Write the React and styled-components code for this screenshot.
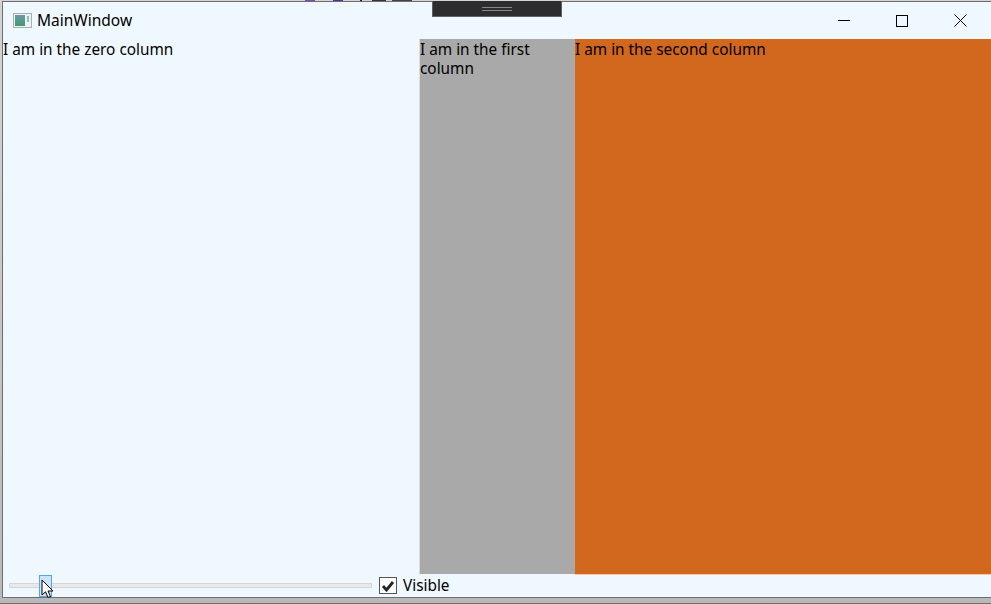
import styled, { createGlobalStyle } from "styled-components"

const GlobalStyle = createGlobalStyle`
  html, body {
    margin: 0;
    padding: 0;
    background: #c4c4c4;
  }
  body {
    font-family: "Noto Sans", "Open Sans", sans-serif;
    color: #000;
  }
`

const Desktop = styled.div`
  width: 991px;
  height: 604px;
  padding: 1px 0 0 2px;
  box-sizing: border-box;
  position: relative;
  overflow: hidden;
  background: linear-gradient(#d4d4d4, #b9b9b9);
  border-bottom: 1px solid #6e6e6e;
`

// bits of whatever sits behind the window, showing above its top edge
const BehindMark = styled.div`
  position: absolute;
  top: 0;
  left: ${props => props.x}px;
  width: ${props => props.w}px;
  height: 1px;
  background: ${props => props.color};
`

const Window = styled.div`
  width: 989px;
  height: 597px;
  box-sizing: border-box;
  border-top: 1px solid #6e6e6e;
  border-left: 1px solid #6e6e6e;
  border-bottom: 1px solid #6e6e6e;
  background: #f0f8ff;
  display: flex;
  flex-direction: column;
`

const TitleBar = styled.div`
  height: 37px;
  flex: none;
  display: flex;
  align-items: center;
  padding: 0 1px 0 10px;
`

const AppIcon = styled.svg`
  width: 19px;
  height: 15px;
  flex: none;
  margin-right: 6px;
`

const Title = styled.span`
  font-size: 15.5px;
  flex: 1;
  position: relative;
  top: -1px;
  margin-left: -1px;
`

const WinButton = styled.div`
  width: 58.5px;
  height: 37px;
  display: flex;
  align-items: center;
  justify-content: center;
`

const Columns = styled.div`
  flex: 1;
  display: flex;
  min-height: 0;
`

const Column = styled.div`
  width: ${props => props.w}px;
  flex: none;
  box-sizing: border-box;
  background: ${props => props.bg};
  border-left: ${props => (props.line ? "1px solid #dcdcdc" : "none")};
  border-bottom: 1px solid ${props => props.edge || "#f0f8ff"};
  font-size: 15.35px;
  line-height: 19px;
  padding-top: 1px;
`

const BottomBar = styled.div`
  height: 22px;
  flex: none;
  display: flex;
  align-items: center;
  box-sizing: border-box;
  padding: 0 0 1px 6px;
`

const SliderBox = styled.div`
  width: 363px;
  height: 5px;
  box-sizing: border-box;
  background: #e7eaec;
  border: 1px solid #d6d6d6;
  position: relative;
`

const Thumb = styled.div`
  position: absolute;
  left: 29px;
  top: -9px;
  width: 13px;
  height: 22px;
  box-sizing: border-box;
  background: #cde4f7;
  border: 1px solid #55a4ec;
`

const Cursor = styled.svg`
  position: absolute;
  left: 31px;
  top: -5px;
  width: 14px;
  height: 20px;
`

const Check = styled.div`
  width: 18px;
  height: 17px;
  box-sizing: border-box;
  border: 1px solid #555;
  background: #fff;
  margin-left: 7px;
  display: flex;
  align-items: center;
  justify-content: center;
`

const CheckLabel = styled.span`
  font-size: 15.35px;
  margin-left: 6px;
  position: relative;
  top: -1px;
`

const DragHandle = styled.div`
  position: absolute;
  left: 432px;
  top: 1px;
  width: 130px;
  height: 16px;
  box-sizing: border-box;
  background: #2d2d30;
  border: 1px solid #5f6064;
  border-top: none;
  display: flex;
  flex-direction: column;
  align-items: center;
  justify-content: center;
  gap: 2px;
`

const HandleLine = styled.div`
  width: 30px;
  height: 1px;
  background: #85858a;
`

export default function App() {
  return (
    <>
      <GlobalStyle />
      <Desktop>
        <BehindMark x={305} w={10} color="#7a4fb0" />
        <BehindMark x={333} w={10} color="#5a2ea0" />
        <BehindMark x={360} w={2} color="#222" />
        <BehindMark x={372} w={14} color="#333" />
        <BehindMark x={392} w={20} color="#444" />
        <Window>
          <TitleBar>
            <AppIcon viewBox="0 0 19 15">
              <defs>
                <linearGradient id="pane" x1="0" y1="0" x2="0" y2="1">
                  <stop offset="0" stopColor="#6f97a8" />
                  <stop offset="1" stopColor="#3f9a6e" />
                </linearGradient>
              </defs>
              <rect x="0.5" y="0.5" width="18" height="14" fill="#eef2f4" stroke="#a9b0b5" />
              <rect x="2" y="2" width="10" height="11" fill="url(#pane)" />
              <rect x="14" y="3" width="2" height="6" fill="#8fc0b8" />
            </AppIcon>
            <Title>MainWindow</Title>
            <WinButton>
              <svg width="12" height="12" viewBox="0 0 12 12">
                <path d="M0 5.5H12" stroke="#000" strokeWidth="1" />
              </svg>
            </WinButton>
            <WinButton>
              <svg width="12" height="12" viewBox="0 0 12 12">
                <rect x="0.5" y="0.5" width="11" height="11" fill="none" stroke="#000" />
              </svg>
            </WinButton>
            <WinButton>
              <svg width="13" height="13" viewBox="0 0 13 13">
                <path d="M0.5 0.5L12.5 12.5M12.5 0.5L0.5 12.5" stroke="#000" strokeWidth="1" />
              </svg>
            </WinButton>
          </TitleBar>
          <Columns>
            <Column w={416} bg="#f0f8ff">I am in the zero column</Column>
            <Column w={156} bg="#a8a9a8" line>I am in the first column</Column>
            <Column w={416} bg="#d1681e" edge="#f3c9a8">I am in the second column</Column>
          </Columns>
          <BottomBar>
            <SliderBox>
              <Thumb />
              <Cursor viewBox="0 0 14 20">
                <path d="M1 1V16L4.5 12.8L7 18.5L9.5 17.5L7 12H12Z" fill="#fff" stroke="#000" strokeWidth="1" />
              </Cursor>
            </SliderBox>
            <Check>
              <svg width="14" height="12" viewBox="0 0 14 12">
                <path d="M2 6L5.5 10L12 2" fill="none" stroke="#222" strokeWidth="2.8" />
              </svg>
            </Check>
            <CheckLabel>Visible</CheckLabel>
          </BottomBar>
        </Window>
        <DragHandle>
          <HandleLine />
          <HandleLine />
        </DragHandle>
      </Desktop>
    </>
  )
}
